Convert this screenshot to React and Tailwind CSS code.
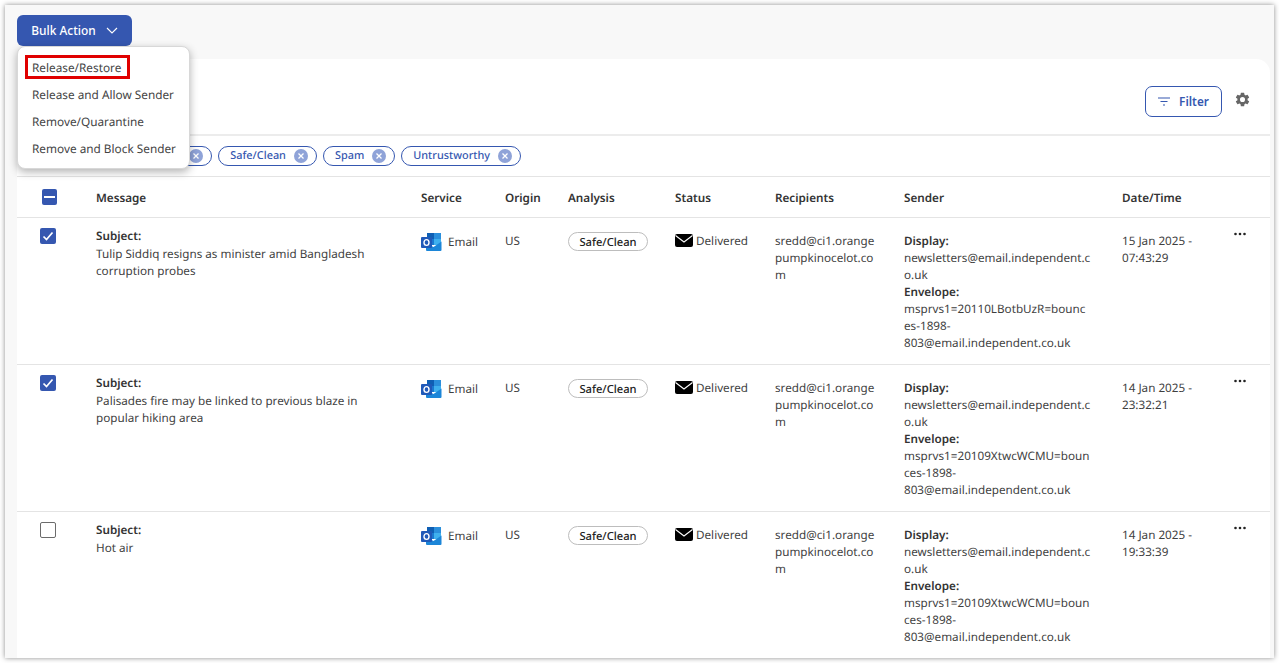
import React from "react";

const grid = "grid grid-cols-[79px_325px_84px_63px_107px_100px_129px_218px_1fr]";

function Outlook() {
  return (
    <svg width="21" height="20" viewBox="0 0 21 20" className="shrink-0">
      <rect x="6" y="1" width="14" height="12" rx="1" fill="#1066b5" />
      <rect x="6" y="1" width="7" height="6" fill="#0f5fb4" />
      <rect x="13" y="1" width="7" height="6" fill="#2b8fdc" />
      <rect x="6" y="7" width="7" height="6" fill="#1a78d0" />
      <rect x="13" y="7" width="7" height="6" fill="#3fb0ee" />
      <path d="M5 11l7.5 4L20.5 9.5V18a1 1 0 0 1-1 1H6a1 1 0 0 1-1-1z" fill="#1c86d8" />
      <rect x="0" y="5" width="11" height="11" rx="1" fill="#2059b8" />
      <ellipse cx="5.5" cy="10.5" rx="2.5" ry="2.9" fill="none" stroke="#fff" strokeWidth="1.4" />
    </svg>
  );
}

function Envelope() {
  return (
    <svg width="18" height="13" viewBox="0 0 18 13" className="block shrink-0">
      <rect width="18" height="13" rx="2" fill="#000" />
      <path d="M0.5 1.5L9 8l8.5-6.5" fill="none" stroke="#fff" strokeWidth="1.1" />
    </svg>
  );
}

function Check({ state }) {
  if (state === "checked")
    return (
      <span className="flex h-[16px] w-[16px] items-center justify-center rounded-[2px] bg-[#3557b0]">
        <svg width="12" height="12" viewBox="0 0 12 12">
          <path d="M1.5 6.5l3 3 6-7" fill="none" stroke="#fff" strokeWidth="1.7" />
        </svg>
      </span>
    );
  return <span className="block h-[16px] w-[16px] rounded-[2px] border border-[#6b6b6b] bg-white" />;
}

function Chip({ label }) {
  return (
    <span className={`flex h-[20px] items-center justify-end gap-[8px] rounded-full border border-[#3557b0] pl-[11px] pr-[8px] text-[10.9px] font-medium text-[#3557b0] ${label ? "" : "w-[100px]"}`}>
      {label ? <span className="pt-[1px]">{label}</span> : null}
      <span className="flex h-[14px] w-[14px] items-center justify-center rounded-full bg-[#8fa3d8]">
        <svg width="8" height="8" viewBox="0 0 8 8">
          <path d="M1.5 1.5l5 5M6.5 1.5l-5 5" stroke="#fff" strokeWidth="1.3" />
        </svg>
      </span>
    </span>
  );
}

function Row({ state, subject, envelope, date, time }) {
  return (
    <div className={`${grid} h-[147px] border-b border-[#e4e4e4] text-[11.7px] leading-[17px] text-[#3f3f3f]`}>
      <div className="pl-[23px] pt-[10px]">
        <Check state={state} />
      </div>
      <div className="w-[285px] pt-[10px]">
        <div className="mb-[1px] font-semibold text-[#333]">Subject:</div>
        <div>{subject}</div>
      </div>
      <div className="flex items-start gap-[6px] pt-[14px]">
        <Outlook />
        <span className="pt-[2px]">Email</span>
      </div>
      <div className="pt-[15px]">US</div>
      <div className="pt-[14px]">
        <span className="inline-flex h-[19px] w-[80px] items-center justify-center rounded-full border border-[#bdbdbd] pt-[1px] text-[11.2px] font-medium text-[#222]">
          Safe/Clean
        </span>
      </div>
      <div className="flex items-start gap-[3px] pt-[15px]">
        <span className="pt-[1px]"><Envelope /></span>
        <span>Delivered</span>
      </div>
      <div className="w-[103px] break-all pt-[15px]">sredd@ci1.orangepumpkinocelot.com</div>
      <div className="w-[187.5px] break-all pt-[15px]">
        <div className="font-semibold text-[#333]">Display:</div>
        <div>newsletters@email.independent.co.uk</div>
        <div className="font-semibold text-[#333]">Envelope:</div>
        <div>{envelope}</div>
        <div>803@email.independent.co.uk</div>
      </div>
      <div className="relative pt-[15px]">
        <div className="w-[90px]">{date} -</div>
        <div>{time}</div>
        <span className="absolute right-[24px] top-[14px]">
          <svg className="block" width="12" height="4" viewBox="0 0 12 4"><circle cx="1.5" cy="2" r="1.3" fill="#222" /><circle cx="6" cy="2" r="1.3" fill="#222" /><circle cx="10.5" cy="2" r="1.3" fill="#222" /></svg>
        </span>
      </div>
    </div>
  );
}

export default function App() {
  const headers = ["Message", "Service", "Origin", "Analysis", "Status", "Recipients", "Sender", "Date/Time"];
  return (
    <div className="h-[663px] overflow-hidden bg-white p-[5px] [text-rendering:geometricPrecision] [font-family:'Noto_Sans','Open_Sans',sans-serif]">
      <div className="relative h-[653px] w-[1269px] overflow-hidden bg-[#f8f8f8] shadow-[0_0_5px_rgba(0,0,0,0.45)]">
        <div className="pl-[12px] pt-[10px]">
          <button className="flex h-[31px] w-[115px] items-center justify-center gap-[10px] rounded-[6px] bg-[#3557b0] text-[11.9px] font-medium text-white">
            Bulk Action
            <svg width="12" height="7" viewBox="0 0 12 7"><path d="M1 1l5 5 5-5" fill="none" stroke="#fff" strokeWidth="1.1" /></svg>
          </button>
        </div>

        <div className="absolute left-[12px] top-[41px] z-10 flex h-[123px] w-[173px] flex-col rounded-[8px] border border-[#d8d8d8] bg-white pl-[14px] pt-[8px] text-[11.8px] leading-[27px] text-[#444] shadow-[0_3px_8px_rgba(0,0,0,0.3)]">
          <span className="relative">
            Release/Restore
            <span className="absolute -left-[7px] top-0 h-[24px] w-[105px] border-[3px] border-[#e00000]" />
          </span>
          <span>Release and Allow Sender</span>
          <span>Remove/Quarantine</span>
          <span>Remove and Block Sender</span>
        </div>

        <div className="ml-[12px] mr-[4px] mt-[13px] h-[620px] rounded-t-[14px] bg-white">
          <div className="flex h-[77px] items-start justify-end border-b-2 border-[#ececec] pr-[19px] pt-[27px]">
            <button className="flex h-[31px] w-[77px] items-center justify-center gap-[9px] rounded-[7px] border border-[#3557b0] text-[11.8px] font-semibold text-[#3557b0]">
              <svg width="12" height="9" viewBox="0 0 12 9"><path d="M0 1h12M2.5 4.5h7M5 8h2" stroke="#3557b0" strokeWidth="1.2" /></svg>
              Filter
            </button>
            <svg className="ml-[12px] mt-[5px]" width="17" height="17" viewBox="0 0 24 24" fill="#666">
              <path d="M19.14 12.94c.04-.3.06-.61.06-.94s-.02-.64-.07-.94l2.03-1.58a.5.5 0 0 0 .12-.61l-1.92-3.32a.5.5 0 0 0-.59-.22l-2.39.96a7 7 0 0 0-1.62-.94l-.36-2.54a.48.48 0 0 0-.48-.41h-3.84a.48.48 0 0 0-.47.41l-.36 2.54c-.59.24-1.13.57-1.62.94l-2.39-.96a.5.5 0 0 0-.59.22L2.74 8.87a.49.49 0 0 0 .12.61l2.03 1.58c-.05.3-.09.63-.09.94s.02.64.07.94l-2.03 1.58a.5.5 0 0 0-.12.61l1.92 3.32c.12.22.37.29.59.22l2.39-.96c.5.38 1.03.7 1.62.94l.36 2.54c.05.24.24.41.48.41h3.84c.24 0 .44-.17.47-.41l.36-2.54c.59-.24 1.13-.56 1.62-.94l2.39.96c.22.08.47 0 .59-.22l1.92-3.32a.49.49 0 0 0-.12-.61zM12 15.6A3.6 3.6 0 1 1 12 8.4a3.6 3.6 0 0 1 0 7.2z" />
            </svg>
          </div>
          <div className="flex h-[41px] items-center justify-end gap-[6px] border-b border-[#e4e4e4] pr-[749px]">
            <Chip label="" />
            <Chip label="Safe/Clean" />
            <Chip label="Spam" />
            <Chip label="Untrustworthy" />
          </div>
          <div className={`${grid} h-[41px] items-center border-b border-[#e4e4e4] text-[11.7px] font-semibold text-[#333]`}>
            <div className="pl-[25px]">
              <span className="flex h-[16px] w-[15px] items-center justify-center rounded-[2px] bg-[#3557b0]">
                <span className="h-[2px] w-[11px] bg-white" />
              </span>
            </div>
            {headers.map((h) => <div key={h} className="pt-[4px]">{h}</div>)}
          </div>
          <Row state="checked" subject="Tulip Siddiq resigns as minister amid Bangladesh corruption probes" envelope="msprvs1=20110LBotbUzR=bounces-1898-" date="15 Jan 2025" time="07:43:29" />
          <Row state="checked" subject="Palisades fire may be linked to previous blaze in popular hiking area" envelope="msprvs1=20109XtwcWCMU=bounces-1898-" date="14 Jan 2025" time="23:32:21" />
          <Row state="none" subject="Hot air" envelope="msprvs1=20109XtwcWCMU=bounces-1898-" date="14 Jan 2025" time="19:33:39" />
        </div>
      </div>
    </div>
  );
}
